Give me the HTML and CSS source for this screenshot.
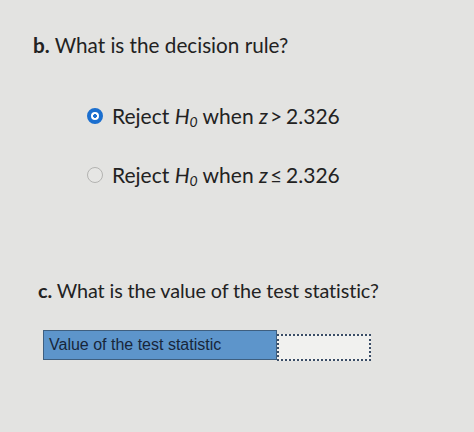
FILE: index.html
```html
<!DOCTYPE html>
<html>
<head>
<meta charset="utf-8">
<link rel="stylesheet" href="styles.css">
</head>
<body>
<div class="page">
  <h2 class="question q-b"><b>b.</b> What is the decision rule?</h2>
  <div class="options">
    <div class="option">
      <span class="radio checked"></span>
      <span class="label">Reject <i>H</i><sub class="zero">0</sub> when <i>z</i><span class="op">&gt;</span>2.326</span>
    </div>
    <div class="option">
      <span class="radio"></span>
      <span class="label">Reject <i>H</i><sub class="zero">0</sub> when <i>z</i><span class="op">≤</span>2.326</span>
    </div>
  </div>
  <h2 class="question q-c"><b>c.</b> What is the value of the test statistic?</h2>
  <div class="answer">
    <div class="answer-label">Value of the test statistic</div>
    <div class="answer-input"></div>
  </div>
</div>
</body>
</html>
```
FILE: styles.css
```css
html, body {
  margin: 0;
  padding: 0;
}
body {
  background: #e3e3e1;
  font-family: Lato, "Open Sans", "Liberation Sans", sans-serif;
  color: #222222;
  width: 474px;
  height: 432px;
  overflow: hidden;
}
.page {
  display: flex;
  flex-direction: column;
  padding-top: 33px;
}
.question {
  margin: 0;
  font-weight: 400;
  font-size: 21px;
  line-height: 24px;
}
.question b {
  font-weight: 700;
}
.q-b {
  margin-left: 33px;
  font-size: 20.7px;
}
.q-c {
  margin-left: 38px;
  margin-top: 91px;
  font-size: 19.8px;
  letter-spacing: -0.1px;
}
.options {
  display: flex;
  flex-direction: column;
  gap: 35px;
  margin-top: 47px;
  margin-left: 87px;
}
.option {
  display: flex;
  align-items: center;
  gap: 9px;
  font-size: 21px;
  line-height: 24px;
}
.radio {
  width: 16px;
  height: 16px;
  border-radius: 50%;
  box-sizing: border-box;
  border: 1.5px solid #b3b3b1;
  background: #e6e6e4;
  flex: none;
}
.radio.checked {
  border: 4.5px solid #1b6fcf;
  background: radial-gradient(circle, #1b6fcf 0 1.6px, #ffffff 2.2px);
}
.label i {
  font-style: italic;
}
.zero {
  font-size: 14px;
  font-style: italic;
  vertical-align: -3px;
  line-height: 0;
}
.op {
  margin: 0 4px 0 2px;
}
.answer {
  display: flex;
  align-items: flex-start;
  margin-top: 28px;
  margin-left: 43px;
}
.answer-label {
  width: 234px;
  height: 30px;
  box-sizing: border-box;
  background: #5d95cb;
  border: 1px solid #3e5f80;
  font-family: "Liberation Sans", Arial, sans-serif;
  font-size: 16px;
  line-height: 28px;
  padding-left: 5px;
  color: #17263a;
}
.answer-input {
  margin-top: 4px;
  width: 94px;
  height: 27px;
  box-sizing: border-box;
  border: 2px dotted #3a4d66;
  background: #f1f1ef;
}
```
